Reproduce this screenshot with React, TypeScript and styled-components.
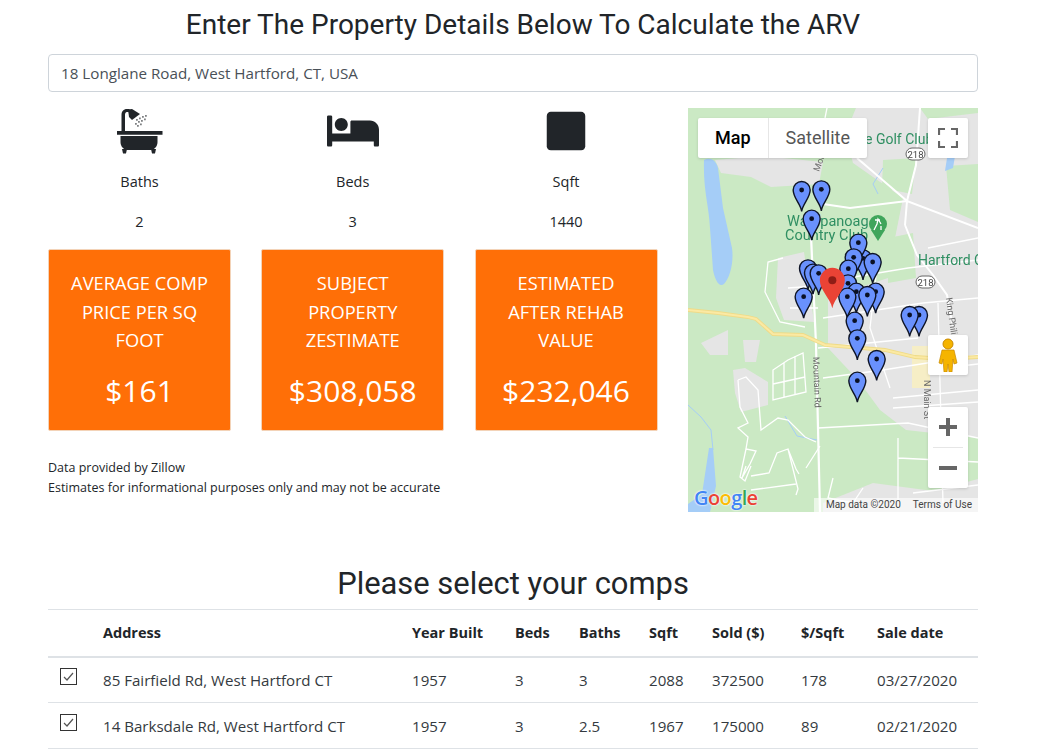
import React from "react";
import styled, { createGlobalStyle } from "styled-components";
import { FaBed, FaSquare } from "react-icons/fa";

const Global = createGlobalStyle`
  html, body { margin: 0; padding: 0; background: #fff; overflow: hidden; }
  body { font-family: "Open Sans", "Noto Sans", sans-serif; color: #212529; }
`;
const Page = styled.div`
  width: 930px; height: 754px; margin-left: 48px; overflow: hidden;
`;
const Title = styled.h1`
  margin: 0; height: 54px; padding-left: 20px; box-sizing: border-box;
  font: 400 28px/50px Roboto, sans-serif; text-align: center; color: #212529;
`;
const AddressInput = styled.div`
  height: 38px; box-sizing: border-box; border: 1px solid #ced4da; border-radius: 4px;
  padding: 0 12px; font-size: 15.2px; line-height: 36px; color: #495057;
`;
const TopGrid = styled.div`
  display: grid; grid-template-columns: 610px 290px; column-gap: 30px; margin-top: 16px;
`;
const Left = styled.div`display: flex; flex-direction: column;`;
const Stats = styled.div`
  display: grid; grid-template-columns: repeat(3, 183px); column-gap: 30.25px;
`;
const Stat = styled.div`
  display: flex; flex-direction: column; align-items: center; font-size: 14.5px; color: #212529;
`;
const IconBox = styled.div`
  height: 46px; display: flex; align-items: center; justify-content: center;
`;
const StatLabel = styled.div`margin-top: 8px; line-height: 40px; height: 40px;`;
const StatValue = styled.div`line-height: 40px; height: 46px;`;
const Cards = styled.div`
  display: grid; grid-template-columns: repeat(3, 183px); column-gap: 30.25px; margin-top: 1px;
`;
const Card = styled.div`
  height: 182px; box-sizing: border-box; background: #ff6f07; color: #fff;
  border: 1px solid #f3d3b8; border-radius: 2px; padding: 19px 20px 0; text-align: center;
`;
const CardTitle = styled.div`font-size: 18.3px; line-height: 28.5px; height: 86px;`;
const CardPrice = styled.div`font-size: 30px; line-height: 40px; margin-top: 16px;`;
const Note = styled.div`
  margin-top: 27px; font-size: 12.5px; line-height: 20px; color: #212529;
`;
const MapBox = styled.div`
  position: relative; width: 290px; height: 404px; overflow: hidden; background: #cbe9c4;
`;
const MapSvg = styled.svg`display: block; filter: blur(0.4px);`;
const MapType = styled.div`
  position: absolute; left: 10px; top: 10px; height: 40px; display: flex; background: #fff;
  font: 400 18px/40px Roboto, sans-serif; box-shadow: 0 1px 3px rgba(0,0,0,.15); border-radius: 2px;
`;
const MapTab = styled.div<{ $active?: boolean }>`
  padding: 0 17px; color: ${p => (p.$active ? "#000" : "#565656")};
  font-weight: ${p => (p.$active ? 500 : 400)};
  & + & { border-left: 1px solid #e6e6e6; }
`;
const MapButton = styled.div<{ $top: number; $h?: number }>`
  position: absolute; right: 10px; top: ${p => p.$top}px; width: 40px; height: ${p => p.$h ?? 40}px;
  background: #fff; box-shadow: 0 1px 3px rgba(0,0,0,.15); border-radius: 2px;
  display: flex; flex-direction: column; align-items: center; justify-content: center;
`;
const ZoomPart = styled.div`
  width: 40px; height: 40px; display: flex; align-items: center; justify-content: center;
`;
const ZoomRule = styled.div`width: 30px; height: 1px; background: #e6e6e6;`;
const Attribution = styled.div`
  position: absolute; right: 0; bottom: 0; height: 14px; padding: 0 6px 0 12px;
  background: rgba(255,255,255,.6); color: #444; display: flex; gap: 12px;
  font: 400 10px/14px Roboto, sans-serif; white-space: nowrap;
`;
const GoogleMark = styled.div`
  position: absolute; left: 6px; bottom: 2px; font: 600 20px/24px "Open Sans", sans-serif; letter-spacing: -0.6px;
  text-shadow: 0 0 2px #fff, 0 0 2px #fff;
`;
const GoogleLetter = styled.span<{ $c: string }>`color: ${p => p.$c};`;
const SubTitle = styled.h2`
  margin: 50px 0 0; height: 44px; font: 400 30.9px/44px Roboto, sans-serif; text-align: center; color: #212529;
`;
const Table = styled.table`
  width: 930px; border-collapse: collapse; table-layout: fixed; margin-top: 3px;
`;
const Th = styled.th`
  height: 47px; padding: 0 0 0 12px; text-align: left; font-size: 14.5px; font-weight: 700;
  border-top: 1px solid #dee2e6; border-bottom: 2px solid #dee2e6; white-space: nowrap; box-sizing: border-box;
`;
const Td = styled.td`
  height: 46px; padding: 0 0 0 12px; border-bottom: 1px solid #dee2e6; color: #343a40;
  white-space: nowrap; box-sizing: border-box; font-size: 15.1px;
`;
const CheckBox = styled.span`
  display: block; width: 15px; height: 15px; margin: -6px 0 0 0; border: 1px solid #333; box-sizing: content-box;
`;
const CheckMark = styled.svg`display: block;`;

const BathIcon = () => (
  <svg width="46" height="46" viewBox="0 0 46 46">
    <g fill="#212529">
      <path d="M0 23h45.500v3.700H0z" />
      <path d="M3.500 28h37v6c0 4.500-3 7.500-7 8H10.500c-4-.5-7-3.500-7-8z" />
      <path d="M5 41h5l-1 4.500H6zM34 41h5l-1 4.500h-3z" />
      <path d="M4.500 23V7c0-3.500 2-6 5.500-6h2.500v3H10C8.500 4 8 5.500 8 7v16z" />
      <path d="M11 1.500l4-.5 8 5-8 6-3-3z" />
    </g>
    <g fill="#7e8082">
      <path d="M19 11h1.800v1.800H19zM22 9.500h1.800v1.800H22zM25 8h1.800v1.800H25zM28 7h1.800v1.800H28zM18 15h1.800v1.800H18zM21 13h1.800v1.800H21zM24 12h1.800v1.800H24zM27 10.500h1.800v1.800H27zM20 17h1.800v1.800H20zM23 15.500h1.800v1.800H23z" />
    </g>
  </svg>
);

const zoomPins: [number, number][] = [
  [341, 270], [400, 268], [371, 356], [525, 475], [511, 428], [497, 472], [554, 486], [481, 506],
  [360, 505], [375, 518], [392, 520], [480, 550], [505, 575], [563, 575], [478, 590], [538, 585],
  [347, 590], [693, 645], [665, 645], [500, 662], [508, 715], [566, 777], [508, 842],
];

const Pin = ({ x, y }: { x: number; y: number }) => (
  <g transform={`translate(${x} ${y})`}>
    <path d="M0 21.500C-.8 14-8.500 8-8.500 0a8.500 8.500 0 0 1 17 0C8.500 8 .8 14 0 21.500z" fill="#6991fd" stroke="#0e1426" strokeWidth="1.400" />
    <circle r="2.400" fill="#0a1024" />
  </g>
);

const mx = (v: number) => v / 3;
const my = (v: number) => v / 3 - 8;

const highway = "M0 202l30 3 30 4 8 2 17 15 30 1 22 10 60 5 30 7 30 2 33-2";

const MapDrawing = () => (
  <MapSvg width="290" height="404" viewBox="0 0 290 404">
    <rect width="290" height="404" fill="#cbe9c4" />
    <g fill="#e5e5e5">
      <path d="M27 52l48-4 60 6-4 22-48 3-20-10-30-4z" />
      <path d="M150 0h140v330l-72-8-26-20-22-30-30-32v-50l60-20 6-35 9-45-50-35z" />
      <path d="M90 150l26-6 10 70-30-2-8-22z" />
      <path d="M13 235l27-13v25H22zM55 232h17l-4 22H57zM45 262l12-2 23 14v23l-27 7-6-19z" />
      <path d="M135 395l50-20 60 8 45-12v33H135z" />
    </g>
    <g fill="#cbe9c4">
      <path d="M195 52l33-2-4 36-30-6zM258 58l32-2v58l-28-12zM200 130l25-5 3 45-28 5zM143 0h25l-5 12-20 2zM232 0h58v5l-50 6z" />
    </g>
    <path d="M224 238h18v42h-18z" fill="#f6eec6" />
    <g fill="#a5cdf7">
      <path d="M16 52c6-3 12 0 14 8l5 40 9 40c2 14-2 30-8 36-5 4-9-4-11-14l-3-42c-1-22-7-38-6-68z" />
      <path d="M21 340l4 0 3 38-6 26H0v-8l14-10z" />
      <path d="M259 50l8-2-2 12-8 3z" />
    </g>
    <path d="M0 297l13 12 10 13 2 20M97 308l12 20 20 4M130 120l2-14M195 60l-10 16 5 10" fill="none" stroke="#a5cdf7" strokeWidth="1" />
    <g fill="none" stroke="#fff" strokeWidth="1.300">
      <path d="M122 106l6 130 4 168" strokeWidth="2.200" />
      <path d="M125 40l12-30 4-20" />
      <path d="M135 96l27 4 57-7 71 27M169 50l50 43M219 93l9-36 4-57M217 117l12 30 16 20 14 20 6 33M219 93l-2 24" strokeWidth="2" />
      <path d="M130 175l90-15 70-8M135 210l100-15 55-5M130 240l100-10M135 270l60-8 95-15M190 150l-8 70 20 60M240 140l50-10M250 195l5 200" />
      <path d="M130 320l90-5 70 15M255 260l35-4M205 290l85-8M205 300l85-6M210 350l80 4M225 385l65-8M210 330v70" />
      <path d="M85 262v30l33-8-3-39-15 7zM96 255v35M107 248v38M85 276l32-7" />
      <path d="M50 272l8-3 12 13 3 40 17-12 10 2 17 17 11 5M50 272l2 27 8 16-10 5 10 9-2 12 10 2-6 13-8 14 4-12M58 341l-6 28 5 4 6-15M63 368l18-3 8-20 11-4 8 20 3 5M118 360l14-22M100 341l10 40-2 6M63 382l45-6" />
      <path d="M95 150l-15 4-3 30 15 30 25 5M100 180l28-2M102 200l28 0" />
      <path d="M145 370l-5 20 25 5 10-15" />
    </g>
    <path d={highway} fill="none" stroke="#efdb88" strokeWidth="3.800" />
    <path d={highway} fill="none" stroke="#fbe9a3" strokeWidth="2" />
    <g fontFamily="Roboto, sans-serif" fill="#2f8f62" fontSize="14">
      <text x="99" y="118" fontSize="14.500">Wampanoag</text>
      <text x="97" y="132" fontSize="14.500">Country Club</text>
      <text x="177" y="36">e Golf Club</text>
      <text x="230" y="157">Hartford C</text>
    </g>
    <g fontFamily="Roboto, sans-serif" fill="#666" fontSize="9">
      <text transform="translate(125 249) rotate(88)">Mountain Rd</text>
      <text transform="translate(236 272) rotate(90)">N Main St</text>
      <text transform="translate(258 190) rotate(82)">King Philip</text>
      <text transform="translate(131 64) rotate(-70)">Mountain</text>
    </g>
    <g>
      <rect x="218" y="40" width="19" height="12" rx="6" fill="#fff" stroke="#666" />
      <text x="227.500" y="49.500" fontSize="9.500" textAnchor="middle" fill="#444" fontFamily="Roboto, sans-serif">218</text>
      <rect x="228" y="168" width="19" height="12" rx="6" fill="#fff" stroke="#666" />
      <text x="237.500" y="177.500" fontSize="9.500" textAnchor="middle" fill="#444" fontFamily="Roboto, sans-serif">218</text>
    </g>
    <circle cx="190" cy="116" r="9" fill="#3fa55b" />
    <path d="M190 133l-7-11h14z" fill="#3fa55b" />
    <path d="M186 122l3-6 1-5 3 5M187 112h5M193 118v4" stroke="#fff" strokeWidth="1.300" fill="none" />
    {zoomPins.map(([x, y], i) => <Pin key={i} x={mx(x)} y={my(y)} />)}
    <g transform={`translate(${mx(433)} ${my(541)})`}>
      <path d="M0 28C-2 18-12.500 10-12.500 0a12.500 12.500 0 0 1 25 0C12.500 10 2 18 0 28z" fill="#ea4335" />
      <circle r="4" fill="#8f1d16" />
    </g>
  </MapSvg>
);

const rows = [
  ["85 Fairfield Rd, West Hartford CT", "1957", "3", "3", "2088", "372500", "178", "03/27/2020"],
  ["14 Barksdale Rd, West Hartford CT", "1957", "3", "2.5", "1967", "175000", "89", "02/21/2020"],
];
const heads = ["Address", "Year Built", "Beds", "Baths", "Sqft", "Sold ($)", "$/Sqft", "Sale date"];
const colWidths = [43, 309, 103, 64, 70, 63, 89, 76, 113];

const cards = [
  ["AVERAGE COMP PRICE PER SQ FOOT", "$161"],
  ["SUBJECT PROPERTY ZESTIMATE", "$308,058"],
  ["ESTIMATED AFTER REHAB VALUE", "$232,046"],
];

export default function App() {
  return (
    <Page>
      <Global />
      <Title>Enter The Property Details Below To Calculate the ARV</Title>
      <AddressInput>18 Longlane Road, West Hartford, CT, USA</AddressInput>
      <TopGrid>
        <Left>
          <Stats>
            <Stat><IconBox><BathIcon /></IconBox><StatLabel>Baths</StatLabel><StatValue>2</StatValue></Stat>
            <Stat><IconBox><FaBed size={52} color="#212529" /></IconBox><StatLabel>Beds</StatLabel><StatValue>3</StatValue></Stat>
            <Stat><IconBox><FaSquare size={44} color="#212529" /></IconBox><StatLabel>Sqft</StatLabel><StatValue>1440</StatValue></Stat>
          </Stats>
          <Cards>
            {cards.map(([t, p]) => (
              <Card key={p}><CardTitle>{t}</CardTitle><CardPrice>{p}</CardPrice></Card>
            ))}
          </Cards>
          <Note>Data provided by Zillow<br />Estimates for informational purposes only and may not be accurate</Note>
        </Left>
        <MapBox>
          <MapDrawing />
          <MapType><MapTab $active>Map</MapTab><MapTab>Satellite</MapTab></MapType>
          <MapButton $top={10}>
            <svg width="20" height="20" viewBox="-1 -1 20 20"><path d="M0 6V0h6M12 0h6v6M18 12v6h-6M6 18H0v-6" fill="none" stroke="#666" strokeWidth="2.200" /></svg>
          </MapButton>
          <MapButton $top={227}>
            <svg width="20" height="34" viewBox="0 0 20 34">
              <circle cx="10" cy="6" r="5" fill="#f5b400" stroke="#c98a00" />
              <path d="M4 12h12l3 13-3 1-1-5-1 13h-3l-1-8-1 8H6L5 21l-1 5-3-1z" fill="#f5b400" stroke="#c98a00" strokeWidth=".7" />
            </svg>
          </MapButton>
          <MapButton $top={299} $h={81}>
            <ZoomPart><svg width="18" height="18" viewBox="0 0 18 18"><path d="M7 0h4v7h7v4h-7v7H7v-7H0V7h7z" fill="#666" /></svg></ZoomPart>
            <ZoomRule />
            <ZoomPart><svg width="18" height="18" viewBox="0 0 18 18"><path d="M0 7h18v4H0z" fill="#666" /></svg></ZoomPart>
          </MapButton>
          <GoogleMark>
            <GoogleLetter $c="#4285f4">G</GoogleLetter><GoogleLetter $c="#ea4335">o</GoogleLetter><GoogleLetter $c="#fbbc05">o</GoogleLetter><GoogleLetter $c="#4285f4">g</GoogleLetter><GoogleLetter $c="#34a853">l</GoogleLetter><GoogleLetter $c="#ea4335">e</GoogleLetter>
          </GoogleMark>
          <Attribution><span>Map data ©2020</span><span>Terms of Use</span></Attribution>
        </MapBox>
      </TopGrid>
      <SubTitle>Please select your comps</SubTitle>
      <Table>
        <colgroup>{colWidths.map((w, i) => <col key={i} width={w} />)}</colgroup>
        <thead><tr><Th />{heads.map(h => <Th key={h}>{h}</Th>)}</tr></thead>
        <tbody>
          {rows.map(r => (
            <tr key={r[0]}>
              <Td>
                <CheckBox>
                  <CheckMark width="15" height="15" viewBox="0 0 15 15"><path d="M3 8l3 3 6-7" fill="none" stroke="#555" strokeWidth="1.200" /></CheckMark>
                </CheckBox>
              </Td>
              {r.map((c, i) => <Td key={i}>{c}</Td>)}
            </tr>
          ))}
        </tbody>
      </Table>
    </Page>
  );
}
